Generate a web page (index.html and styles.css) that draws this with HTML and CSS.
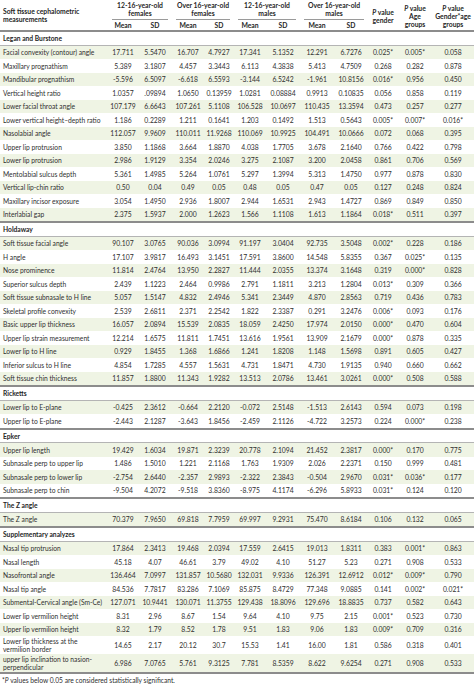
FILE: index.html
```html
<!DOCTYPE html>
<html>
<head>
<meta charset="utf-8">
<link rel="stylesheet" href="styles.css">
</head>
<body>
<table class="tbl">
<colgroup>
<col class="c-label"><col class="c30"><col class="c34"><col class="c32"><col class="c30"><col class="c32"><col class="c34"><col class="c34"><col class="c34"><col class="c30"><col class="c34"><col class="c42">
</colgroup>
<thead>
<tr class="h1">
<th rowspan="2" class="lab">Soft tissue cephalometric measurements</th>
<th colspan="2"><div class="grp">12-16-year-old<br>females</div></th>
<th colspan="2"><div class="grp">Over 16-year-old<br>females</div></th>
<th colspan="2"><div class="grp">12-16-year-old<br>males</div></th>
<th colspan="2"><div class="grp">Over 16-year-old<br>males</div></th>
<th rowspan="2" class="pv"><i>P</i> value<br>gender</th>
<th rowspan="2" class="pv"><i>P</i> value<br>Age<br>groups</th>
<th rowspan="2" class="pv"><i>P</i> value<br>Gender*age<br>groups</th>
</tr>
<tr class="h2">
<th>Mean</th><th>SD</th><th>Mean</th><th>SD</th><th>Mean</th><th>SD</th><th>Mean</th><th>SD</th>
</tr>
</thead>
<tbody class="first">
<tr class="sec"><td colspan="12">Legan and Burstone</td></tr>
<tr><td>Facial convexity (contour) angle</td><td>17.711</td><td>5.5470</td><td>16.707</td><td>4.7927</td><td>17.341</td><td>5.1352</td><td>12.291</td><td>6.7276</td><td>0.025*</td><td>0.005*</td><td>0.058</td></tr>
<tr><td>Maxillary prognathism</td><td>5.389</td><td>3.1807</td><td>4.457</td><td>3.3443</td><td>6.113</td><td>4.3838</td><td>5.413</td><td>4.7509</td><td>0.268</td><td>0.282</td><td>0.878</td></tr>
<tr><td>Mandibular prognathism</td><td>-5.596</td><td>6.5097</td><td>-6.618</td><td>6.5593</td><td>-3.144</td><td>6.5242</td><td>-1.961</td><td>10.8156</td><td>0.016*</td><td>0.956</td><td>0.450</td></tr>
<tr><td>Vertical height ratio</td><td>1.0357</td><td>.09894</td><td>1.0650</td><td>0.13959</td><td>1.0281</td><td>0.08884</td><td>0.9913</td><td>0.10835</td><td>0.056</td><td>0.858</td><td>0.119</td></tr>
<tr><td>Lower facial throat angle</td><td>107.179</td><td>6.6643</td><td>107.261</td><td>5.1108</td><td>106.528</td><td>10.0697</td><td>110.435</td><td>13.3594</td><td>0.473</td><td>0.257</td><td>0.277</td></tr>
<tr><td>Lower vertical height–depth ratio</td><td>1.186</td><td>0.2289</td><td>1.211</td><td>0.1641</td><td>1.203</td><td>0.1492</td><td>1.513</td><td>0.5643</td><td>0.005*</td><td>0.007*</td><td>0.016*</td></tr>
<tr><td>Nasolabial angle</td><td>112.057</td><td>9.9609</td><td>110.011</td><td>11.9268</td><td>110.069</td><td>10.9925</td><td>104.491</td><td>10.0666</td><td>0.072</td><td>0.068</td><td>0.395</td></tr>
<tr><td>Upper lip protrusion</td><td>3.850</td><td>1.1868</td><td>3.664</td><td>1.8870</td><td>4.038</td><td>1.7705</td><td>3.678</td><td>2.1640</td><td>0.766</td><td>0.422</td><td>0.798</td></tr>
<tr><td>Lower lip protrusion</td><td>2.986</td><td>1.9129</td><td>3.354</td><td>2.0246</td><td>3.275</td><td>2.1087</td><td>3.200</td><td>2.0458</td><td>0.861</td><td>0.706</td><td>0.569</td></tr>
<tr><td>Mentolabial sulcus depth</td><td>5.361</td><td>1.4985</td><td>5.264</td><td>1.0761</td><td>5.297</td><td>1.3994</td><td>5.313</td><td>1.4750</td><td>0.977</td><td>0.878</td><td>0.830</td></tr>
<tr><td>Vertical lip-chin ratio</td><td>0.50</td><td>0.04</td><td>0.49</td><td>0.05</td><td>0.48</td><td>0.05</td><td>0.47</td><td>0.05</td><td>0.127</td><td>0.248</td><td>0.824</td></tr>
<tr><td>Maxillary incisor exposure</td><td>3.054</td><td>1.4950</td><td>2.936</td><td>1.8007</td><td>2.944</td><td>1.6531</td><td>2.943</td><td>1.4727</td><td>0.869</td><td>0.849</td><td>0.850</td></tr>
<tr><td>Interlabial gap</td><td>2.375</td><td>1.5937</td><td>2.000</td><td>1.2623</td><td>1.566</td><td>1.1108</td><td>1.613</td><td>1.1864</td><td>0.018*</td><td>0.511</td><td>0.397</td></tr>
</tbody>
<tbody>
<tr class="sec"><td colspan="12">Holdaway</td></tr>
<tr><td>Soft tissue facial angle</td><td>90.107</td><td>3.0765</td><td>90.036</td><td>3.0994</td><td>91.197</td><td>3.0404</td><td>92.735</td><td>3.5048</td><td>0.002*</td><td>0.228</td><td>0.186</td></tr>
<tr><td>H angle</td><td>17.107</td><td>3.9817</td><td>16.493</td><td>3.1451</td><td>17.591</td><td>3.8600</td><td>14.548</td><td>5.8355</td><td>0.367</td><td>0.025*</td><td>0.135</td></tr>
<tr><td>Nose prominence</td><td>11.814</td><td>2.4764</td><td>13.950</td><td>2.2827</td><td>11.444</td><td>2.0355</td><td>13.374</td><td>3.1648</td><td>0.319</td><td>0.000*</td><td>0.828</td></tr>
<tr><td>Superior sulcus depth</td><td>2.439</td><td>1.1223</td><td>2.464</td><td>0.9986</td><td>2.791</td><td>1.1811</td><td>3.213</td><td>1.2804</td><td>0.013*</td><td>0.309</td><td>0.366</td></tr>
<tr><td>Soft tissue subnasale to H line</td><td>5.057</td><td>1.5147</td><td>4.832</td><td>2.4946</td><td>5.341</td><td>2.3449</td><td>4.870</td><td>2.8563</td><td>0.719</td><td>0.436</td><td>0.783</td></tr>
<tr><td>Skeletal profile convexity</td><td>2.539</td><td>2.6811</td><td>2.371</td><td>2.2542</td><td>1.822</td><td>2.3387</td><td>0.291</td><td>3.2476</td><td>0.006*</td><td>0.093</td><td>0.176</td></tr>
<tr><td>Basic upper lip thickness</td><td>16.057</td><td>2.0894</td><td>15.539</td><td>2.0835</td><td>18.059</td><td>2.4250</td><td>17.974</td><td>2.0150</td><td>0.000*</td><td>0.470</td><td>0.604</td></tr>
<tr><td>Upper lip strain measurement</td><td>12.214</td><td>1.6575</td><td>11.811</td><td>1.7451</td><td>13.616</td><td>1.9561</td><td>13.909</td><td>2.1679</td><td>0.000*</td><td>0.878</td><td>0.335</td></tr>
<tr><td>Lower lip to H line</td><td>0.929</td><td>1.8455</td><td>1.368</td><td>1.6866</td><td>1.241</td><td>1.8208</td><td>1.148</td><td>1.5698</td><td>0.891</td><td>0.605</td><td>0.427</td></tr>
<tr><td>Inferior sulcus to H line</td><td>4.854</td><td>1.7285</td><td>4.557</td><td>1.5631</td><td>4.731</td><td>1.8471</td><td>4.730</td><td>1.9135</td><td>0.940</td><td>0.660</td><td>0.662</td></tr>
<tr><td>Soft tissue chin thickness</td><td>11.857</td><td>1.8800</td><td>11.343</td><td>1.9282</td><td>13.513</td><td>2.0786</td><td>13.461</td><td>3.0261</td><td>0.000*</td><td>0.508</td><td>0.588</td></tr>
</tbody>
<tbody>
<tr class="sec"><td colspan="12">Ricketts</td></tr>
<tr><td>Lower lip to E-plane</td><td>-0.425</td><td>2.3612</td><td>-0.664</td><td>2.2120</td><td>-0.072</td><td>2.5148</td><td>-1.513</td><td>2.6143</td><td>0.594</td><td>0.073</td><td>0.198</td></tr>
<tr><td>Upper lip to E-plane</td><td>-2.443</td><td>2.1287</td><td>-3.643</td><td>1.8456</td><td>-2.459</td><td>2.1126</td><td>-4.722</td><td>3.2573</td><td>0.224</td><td>0.000*</td><td>0.238</td></tr>
</tbody>
<tbody>
<tr class="sec"><td colspan="12">Epker</td></tr>
<tr><td>Upper lip length</td><td>19.429</td><td>1.6034</td><td>19.871</td><td>2.3239</td><td>20.778</td><td>2.1094</td><td>21.452</td><td>2.3817</td><td>0.000*</td><td>0.170</td><td>0.775</td></tr>
<tr><td>Subnasale perp to upper lip</td><td>1.486</td><td>1.5010</td><td>1.221</td><td>2.1168</td><td>1.763</td><td>1.9309</td><td>2.026</td><td>2.2371</td><td>0.150</td><td>0.999</td><td>0.481</td></tr>
<tr><td>Subnasale perp to lower lip</td><td>-2.754</td><td>2.6440</td><td>-2.357</td><td>2.9893</td><td>-2.322</td><td>2.3843</td><td>-0.504</td><td>2.9670</td><td>0.031*</td><td>0.036*</td><td>0.177</td></tr>
<tr><td>Subnasale perp to chin</td><td>-9.504</td><td>4.2072</td><td>-9.518</td><td>3.8360</td><td>-8.975</td><td>4.1174</td><td>-6.296</td><td>5.8933</td><td>0.031*</td><td>0.124</td><td>0.120</td></tr>
</tbody>
<tbody>
<tr class="sec"><td colspan="12">The Z angle</td></tr>
<tr><td>The Z angle</td><td>70.379</td><td>7.9650</td><td>69.818</td><td>7.7959</td><td>69.997</td><td>9.2931</td><td>75.470</td><td>8.6184</td><td>0.106</td><td>0.132</td><td>0.065</td></tr>
</tbody>
<tbody class="last">
<tr class="sec"><td colspan="12">Supplementary analyzes</td></tr>
<tr><td>Nasal tip protrusion</td><td>17.864</td><td>2.3413</td><td>19.468</td><td>2.0394</td><td>17.559</td><td>2.6415</td><td>19.013</td><td>1.8311</td><td>0.383</td><td>0.001*</td><td>0.863</td></tr>
<tr><td>Nasal length</td><td>45.18</td><td>4.07</td><td>46.61</td><td>3.79</td><td>49.02</td><td>4.10</td><td>51.27</td><td>5.23</td><td>0.271</td><td>0.908</td><td>0.533</td></tr>
<tr><td>Nasofrontal angle</td><td>136.464</td><td>7.0997</td><td>131.857</td><td>10.5680</td><td>132.031</td><td>9.9336</td><td>126.391</td><td>12.6912</td><td>0.012*</td><td>0.009*</td><td>0.790</td></tr>
<tr><td>Nasal tip angle</td><td>84.536</td><td>7.7817</td><td>83.286</td><td>7.1069</td><td>85.875</td><td>8.4729</td><td>77.348</td><td>9.0885</td><td>0.141</td><td>0.002*</td><td>0.021*</td></tr>
<tr><td>Submental-Cervical angle (Sm-Ce)</td><td>127.071</td><td>10.9441</td><td>130.071</td><td>11.3755</td><td>129.438</td><td>18.8096</td><td>129.696</td><td>18.8835</td><td>0.737</td><td>0.582</td><td>0.643</td></tr>
<tr><td>Lower lip vermilion height</td><td>8.31</td><td>2.96</td><td>8.67</td><td>1.54</td><td>9.64</td><td>4.10</td><td>9.75</td><td>2.15</td><td>0.001*</td><td>0.523</td><td>0.730</td></tr>
<tr><td>Upper lip vermilion height</td><td>8.32</td><td>1.79</td><td>8.52</td><td>1.78</td><td>9.51</td><td>1.83</td><td>9.06</td><td>1.83</td><td>0.009*</td><td>0.709</td><td>0.316</td></tr>
<tr class="tall"><td>Lower lip thickness at the<br>vermilion border</td><td>14.65</td><td>2.17</td><td>20.12</td><td>30.7</td><td>15.53</td><td>1.41</td><td>16.00</td><td>1.81</td><td>0.586</td><td>0.318</td><td>0.401</td></tr>
<tr class="tall"><td>upper lip inclination to nasion-<br>perpendicular</td><td>6.986</td><td>7.0765</td><td>5.761</td><td>9.3125</td><td>7.781</td><td>8.5359</td><td>8.622</td><td>9.6254</td><td>0.271</td><td>0.908</td><td>0.533</td></tr>
</tbody>
</table>
<p class="note">*<i>P</i> values below 0.05 are considered statistically significant.</p>
</body>
</html>
```
FILE: styles.css
```css
html, body {
  margin: 0;
  padding: 0;
  background: #ffffff;
}
body {
  font-family: "Lato", "Liberation Sans", sans-serif;
  color: #2f2f2f;
  width: 474px;
}
.tbl {
  width: 474px;
  border-collapse: collapse;
  table-layout: fixed;
  font-size: 6.8px;
}
.c-label { width: 108px; }
.c30 { width: 30px; }
.c32 { width: 32px; }
.c34 { width: 34px; }
.c42 { width: 42px; }

.tbl th {
  font-weight: bold;
  color: #262626;
  padding: 0;
  text-align: center;
  line-height: 8px;
}
.tbl thead th.lab {
  text-align: left;
  padding-left: 3px;
  padding-right: 20px;
  vertical-align: middle;
}
.tbl thead th.pv {
  vertical-align: middle;
  padding-top: 2px;
}
.tbl .h1 th {
  height: 20px;
  vertical-align: bottom;
}
.tbl .grp {
  margin: 0 4px 0 4px;
  padding-bottom: 2px;
  border-bottom: 1px solid #9a9a9a;
}
.tbl .h2 th {
  height: 10px;
  vertical-align: middle;
}
.tbl thead {
  border-bottom: 2px solid #8c8c8c;
}
.tbl td {
  padding: 0;
  height: 13.5px;
  line-height: 8px;
  text-align: center;
  vertical-align: middle;
  white-space: nowrap;
}
.tbl td:first-child {
  text-align: left;
  padding-left: 3px;
  font-size: 6.7px;
}
.tbl tbody tr:nth-child(even) td {
  background: #eff4e4;
}
.tbl tr.sec td {
  font-weight: bold;
  color: #262626;
  height: 12.5px;
  border-bottom: 1px solid #b4b4b4;
}
.tbl tbody + tbody tr.sec td {
  border-top: 2px solid #8c8c8c;
}
.tbl tr.tall td {
  height: 18px;
}
.tbl tbody.last {
  border-bottom: 2px solid #8c8c8c;
}
.note {
  margin: 2px 0 0 2px;
  font-size: 6.7px;
  line-height: 8px;
  color: #2f2f2f;
}
```
